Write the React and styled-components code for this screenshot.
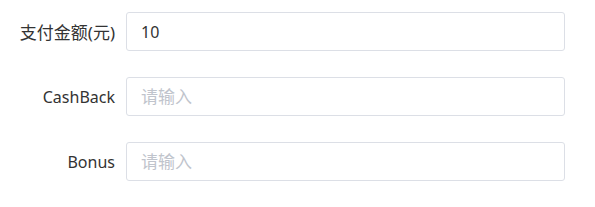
import React from 'react';
import styled, { createGlobalStyle } from 'styled-components';

const Global = createGlobalStyle`
  body {
    margin: 0;
    background: #fff;
    font-family: "Noto Sans", "Noto Sans CJK SC", sans-serif;
  }
`;

const Form = styled.form`
  display: flex;
  flex-direction: column;
  gap: 26px;
  padding: 12px 0 0 0;
  width: 565px;
`;

const Row = styled.div`
  display: grid;
  grid-template-columns: 126px 1fr;
  align-items: center;
`;

const Label = styled.label`
  text-align: right;
  padding-right: 11px;
  font-size: ${(p) => (p.$cjk ? '17px' : '16px')};
  color: #333;
  white-space: nowrap;
`;

const Input = styled.input`
  box-sizing: border-box;
  height: 39px;
  width: 100%;
  border: 1px solid #dcdfe6;
  border-radius: 3px;
  padding: 0 14px;
  font-family: inherit;
  font-size: 16px;
  color: #333;
  outline: none;
  &::placeholder {
    color: #c0c4cc;
    font-size: 17px;
  }
`;

const fields = [
  { label: '支付金额(元)', value: '10', cjk: true },
  { label: 'CashBack', value: '' },
  { label: 'Bonus', value: '' },
];

const App = () => {
  return (
    <>
      <Global />
      <Form>
        {fields.map((f) => (
          <Row key={f.label}>
            <Label $cjk={f.cjk}>{f.label}</Label>
            <Input defaultValue={f.value} placeholder="请输入" />
          </Row>
        ))}
      </Form>
    </>
  );
};

export default App;
